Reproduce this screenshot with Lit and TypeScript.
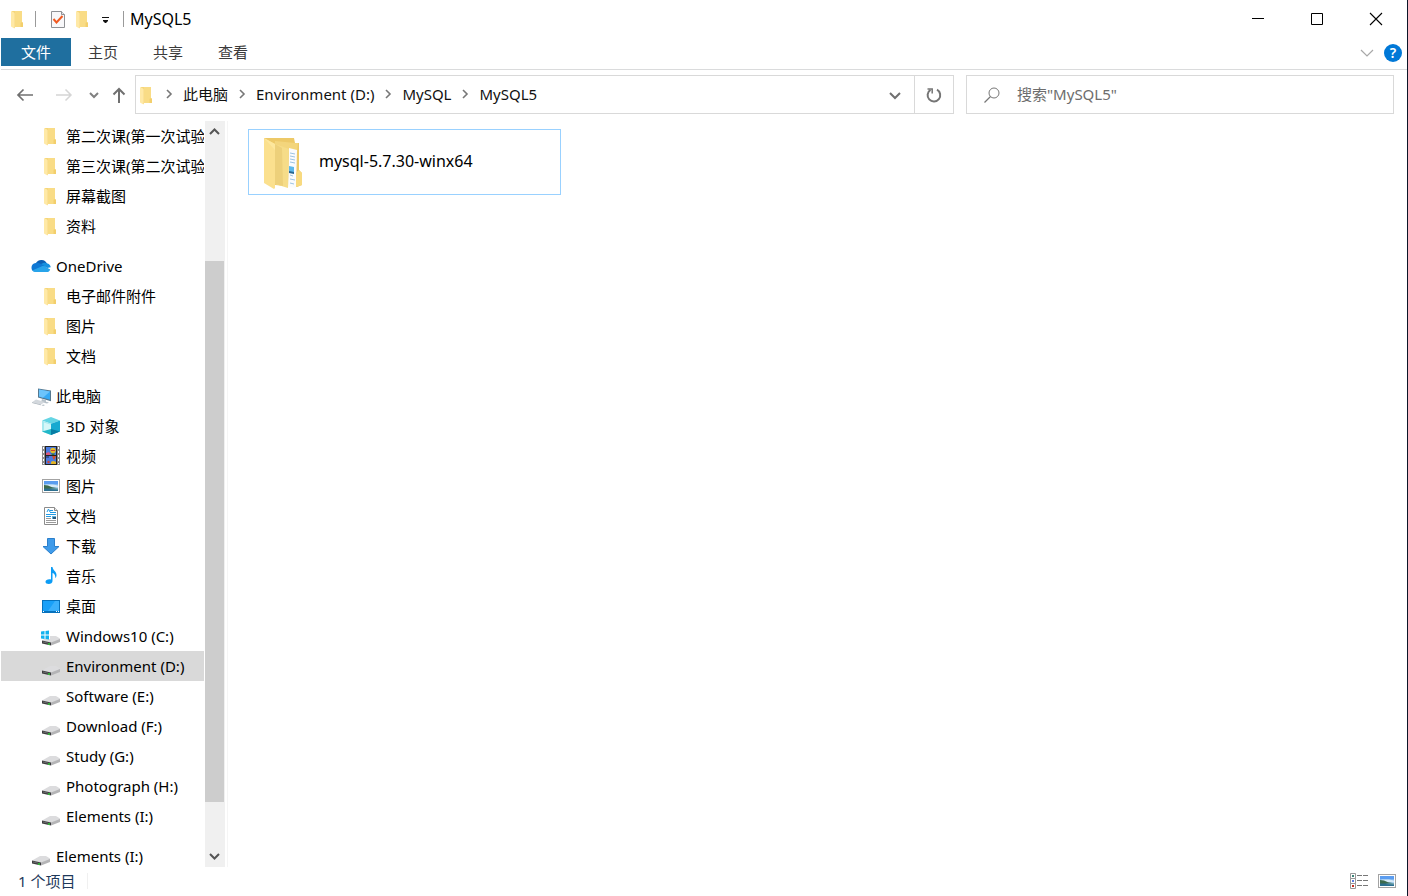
import { LitElement, html, css, svg, nothing } from "lit";
import { customElement, property } from "lit/decorators.js";

const picture = svg`
  <path d="M1 3h18v14H1z" fill="#a3a3a3"/><path d="M2 4h16v12H2z" fill="#fff"/>
  <path d="M3 5h14v10H3z" fill="#7fb7f0"/><path d="M3 5h14v3H3z" fill="#5b9df0"/>
  <path d="M5 8.500h7l5 1v2H3v-2z" fill="#d6e9f7"/>
  <path d="M3 9l4 .6 4 1.700 6 .9v.8H3z" fill="#3c6a4c"/><path d="M3 12.500h14V15H3z" fill="#2c6f8f"/>
  <path d="M8 13l9-1v1.500z" fill="#7fb0bb"/>`;

const drive = svg`
  <path d="M1 14.500L9 10h6l4 2.500v1.500l-9 3z" fill="#dcdcde"/>
  <path d="M10 16.500l9-3.500v3l-9 3.500z" fill="#b4b4b6"/>
  <path d="M1 14.500l9 2v3l-9-2z" fill="#3d3d3f"/>
  <path d="M2 15.600l5 1.200v.8l-5-1.100z" fill="#707072"/>
  <circle cx="8" cy="17.900" r="1" fill="#2fd23a"/>`;

const art = {
  folder: svg`
    <path d="M4 2h10v11l1 1v4H5z" fill="#f6d67a"/>
    <path d="M7 2h7v11l-2 1v4H7z" fill="#f9dc86"/>
    <path d="M13 14l1-1 1 1v4h-2z" fill="#f3cf6c"/>
    <path d="M3 2l3 1.500 1 2V19l-1 .3L3 17.500z" fill="#ffe9a6"/>
    <path d="M6 3.500l1 2V19l-1 .3z" fill="#fbe196"/>`,
  cloud: svg`
    <path d="M5 7a6.200 6.200 0 0 1 11 .8L10 12z" fill="#0b5fb4"/>
    <path d="M4.800 7C7 6.400 8.500 7.200 10 8l5 3-11 4.800C-1 15 -.6 7.500 4.800 7z" fill="#0f78d4"/>
    <path d="M10 8c3-1.600 5-1.600 6.500-.5 2 .6 3 2 3.200 3.700L16 12z" fill="#1590df"/>
    <path d="M1.200 14.600L11 10.200c1.500-.6 2.500 0 3.500.6l4.700 2.600c-.4 1.500-1.500 2.600-3.200 2.600H4.500c-1.500 0-2.500-.5-3.300-1.400z" fill="#28a4ea"/>`,
  pc: svg`
    <path d="M7 2.500l13 2v10.700L7 11.500z" fill="#56788f"/>
    <path d="M8 3.600l11 1.800v8.400L8 10.600z" fill="#36a9f4"/>
    <path d="M8 3.600l11 1.800-7 6.400-4-1.200z" fill="#6cc4fb"/>
    <path d="M11 13l4 1.200v1.600l3 .8-2 .9-6-1.500z" fill="#b6c0c8"/>
    <path d="M5 13.500l9 2.500-4 2.500-9-2.300z" fill="#d3d8dd"/>
    <path d="M1 16.200l9 2.300v.8l-9-2.200z" fill="#a8b1b9"/>
    <path d="M12 18.500l2 .5-1.500 1-2-.5z" fill="#bac3ca"/>`,
  cube: svg`
    <path d="M10 1l9 3.500-9 3.300L1 4.500z" fill="#65d5e4"/>
    <path d="M1 4.500l9 3.300V19l-9-3.500z" fill="#a6e9ef"/>
    <path d="M19 4.500l-9 3.300V19l9-3.500z" fill="#16a9d0"/>
    <path d="M3 6.500l7 2.300v5.700l-7 2.300z" fill="#d6f7f8"/>
    <path d="M1 15.500l9-2.500v6z" fill="#22b7c8"/>
    <path d="M10 13v6l9-3.500z" fill="#087da4"/>`,
  video: svg`
    <path d="M1 0h18v19H1z" fill="#8d8d8d"/><path d="M4 0h12v19H4z" fill="#222"/>
    <path d="M2 1h1v2H2zm0 4h1v2H2zm0 4h1v2H2zm0 4h1v2H2zm0 4h1v1H2zM17 1h1v2h-1zm0 4h1v2h-1zm0 4h1v2h-1zm0 4h1v2h-1zm0 4h1v1h-1z" fill="#fff"/>
    <path d="M5 1h10v8H5zm0 9h10v8H5z" fill="#4a7be0"/>
    <circle cx="12" cy="4.500" r="2.700" fill="#e5bb25"/><path d="M10 4h4v1h-4z" fill="#cc3f2f"/>
    <path d="M5 7l3-1 2 3H5z" fill="#dc587d"/><path d="M10 7.500h4l-1 1.500h-2z" fill="#3b7638"/>
    <path d="M11 10h4l-1.500 3.500h-1z" fill="#d64b27"/><circle cx="7.500" cy="16" r="1.200" fill="#d34434"/>
    <path d="M10 16q2-2 5 0v2h-5z" fill="#e0b325"/><path d="M5 10h3v2H5z" fill="#345099"/>`,
  picture,
  document: svg`
    <path d="M3.500 1.500h10l3 3v14h-13z" fill="#fff" stroke="#8b8b8b"/>
    <path d="M13.500 1.500v3h3" fill="#e9e9e9" stroke="#8b8b8b"/>
    <path d="M6 6l1.500-3L9 6M9 4.500h3M9 6.500h6M5 8.500h10M5 10.500h5" fill="none" stroke="#219ae4"/>
    <path d="M11 10h4v3h-4z" fill="#5fb1dc"/><path d="M12 11h3v2h-3z" fill="#28577c"/>
    <path d="M5 12.500h5M5 14.500h10M5 16.500h10" stroke="#9a9a9a"/>`,
  download: svg`<path d="M6.500 2.500h7v8h4.500L10 18l-8-7.500h4.500z" fill="#3f9bea" stroke="#2b7fcb"/>`,
  music: svg`
    <path d="M10 1h1.500c.5 3.500 4 4.500 4 8 0 1.500-.5 2.500-1.200 3.200.2-3-.8-4.700-2.800-5.200v8c0 2-1.800 3-3.700 3-2 0-3.300-1-3.300-2.300C4.500 14 7 13 10 13.500z" fill="#0c9cf5"/>`,
  desktop: svg`
    <path d="M1 4h18v13H1z" fill="#0672bd"/><path d="M2 5h16v10H2z" fill="#19a0f8"/>
    <path d="M14 5h4v10H7z" fill="#3bb0fb"/><path d="M2 15h1v1H2zm13 0h1v1h-1zm2 0h1v1h-1z" fill="#fff"/>`,
  drive,
  system: svg`
    ${drive}
    <path d="M0 4h9v9H0z" fill="#fff"/>
    <path d="M0 5.500l3.500-.5v3.500H0zM4.500 5L8 4.500v4H4.500zM0 9.500h3.500V13L0 12.500zM4.500 9.500H8v4l-3.500-.5z" fill="#12b2ef"/>`,
  check: svg`
    <path d="M3.500 2.500h10l3 3v13h-13z" fill="#f8f8fa" stroke="#8f9195"/>
    <path d="M13.500 2.500v3h3" fill="#e3e4e8" stroke="#8f9195"/>
    <path d="M5.500 10l3 3.500 6-6.500" fill="none" stroke="#f05a22" stroke-width="2"/>`,
  customize: svg`<path d="M4 8h7v1H4zM5 11h5v1L8 14H7l-2-2z" fill="#111"/>`,
  back: svg`<path d="M18 10H3M8.500 4.500L3 10l5.500 5.500" fill="none" stroke="#707070" stroke-width="1.700"/>`,
  forward: svg`<path d="M2 10h15M11.500 4.500L17 10l-5.500 5.500" fill="none" stroke="#d5d5d5" stroke-width="1.500"/>`,
  recent: svg`<path d="M6 8l4 4 4-4" fill="none" stroke="#808080" stroke-width="2"/>`,
  up: svg`<path d="M10 18V4M4.500 9.500L10 4l5.500 5.500" fill="none" stroke="#707070" stroke-width="2"/>`,
  down: svg`<path d="M5 8l5 5 5-5" fill="none" stroke="#707070" stroke-width="2"/>`,
  expand: svg`<path d="M4 7l6 6 6-6" fill="none" stroke="#a8a8a8" stroke-width="1.200"/>`,
  refresh: svg`
    <path d="M13 4.700a6.300 6.300 0 1 1-6.500 .2" fill="none" stroke="#757575" stroke-width="2"/>
    <path d="M3.500 4h4.700v4.500" fill="none" stroke="#757575" stroke-width="1.500"/>`,
  search: svg`<circle cx="12" cy="8" r="5" fill="none" stroke="#777"/><path d="M8.500 11.500L2.500 17.500" stroke="#777" stroke-width="1.200"/>`,
  crumb: svg`<path d="M8 5l4 4-4 4" fill="none" stroke="#777" stroke-width="1.600"/>`,
  minimize: svg`<path d="M4 9h12v1H4z" fill="#000"/>`,
  maximize: svg`<path d="M4.500 4.500h11v11h-11z" fill="none" stroke="#000"/>`,
  close: svg`<path d="M4 4l12 12M16 4L4 16" stroke="#000" stroke-width="1.100"/>`,
  scrollUp: svg`<path d="M5 13l4.500-4.500L14 13" fill="none" stroke="#555" stroke-width="2"/>`,
  scrollDown: svg`<path d="M5 7l4.500 4.500L14 7" fill="none" stroke="#555" stroke-width="2"/>`,
  details: svg`
    <path d="M1.500 2.500h5v5h-5zM1.500 7.500h5v5h-5zM1.500 12.500h5v5h-5z" fill="#fff" stroke="#999"/>
    <path d="M3 4h2v2H3z" fill="#3b8276"/><path d="M3 9h2v2H3z" fill="#5d7de0"/><path d="M3 14h2v2H3z" fill="#c42d20"/>
    <path d="M8 4.500h5M14 4.500h5M8 9.500h5M14 9.500h5M8 14.500h5M14 14.500h5" stroke="#777"/>`,
};

type IconName = keyof typeof art;
const icon = (name: IconName) =>
  html`<svg class="icon" viewBox="0 0 20 20" aria-hidden="true">${art[name]}</svg>`;

const iconStyles = css`
  .icon {
    display: block;
    flex: none;
    width: 20px;
    height: 20px;
  }
  button {
    display: flex;
    align-items: center;
    justify-content: center;
    margin: 0;
    padding: 0;
    border: 0;
    background: none;
    font: inherit;
    color: inherit;
  }
`;

interface TreeItem {
  label: string;
  icon: IconName;
  root?: boolean;
  selected?: boolean;
}

const groups: TreeItem[][] = [
  [
    { label: "第二次课(第一次试验", icon: "folder" },
    { label: "第三次课(第二次试验", icon: "folder" },
    { label: "屏幕截图", icon: "folder" },
    { label: "资料", icon: "folder" },
  ],
  [
    { label: "OneDrive", icon: "cloud", root: true },
    { label: "电子邮件附件", icon: "folder" },
    { label: "图片", icon: "folder" },
    { label: "文档", icon: "folder" },
  ],
  [
    { label: "此电脑", icon: "pc", root: true },
    { label: "3D 对象", icon: "cube" },
    { label: "视频", icon: "video" },
    { label: "图片", icon: "picture" },
    { label: "文档", icon: "document" },
    { label: "下载", icon: "download" },
    { label: "音乐", icon: "music" },
    { label: "桌面", icon: "desktop" },
    { label: "Windows10 (C:)", icon: "system" },
    { label: "Environment (D:)", icon: "drive", selected: true },
    { label: "Software (E:)", icon: "drive" },
    { label: "Download (F:)", icon: "drive" },
    { label: "Study (G:)", icon: "drive" },
    { label: "Photograph (H:)", icon: "drive" },
    { label: "Elements (I:)", icon: "drive" },
  ],
  [{ label: "Elements (I:)", icon: "drive", root: true }],
];

@customElement("folder-tree")
class FolderTree extends LitElement {
  @property({ attribute: false }) groups: TreeItem[][] = [];

  static styles = [
    iconStyles,
    css`
      :host {
        display: grid;
        grid-template-columns: minmax(0, 1fr) 20px;
        gap: 1px;
        min-height: 0;
        overflow: hidden;
      }
      .tree {
        display: flex;
        flex-direction: column;
        gap: 10px;
        min-height: 0;
        overflow: hidden;
      }
      .group {
        flex: none;
        margin: 0;
        padding: 0;
        list-style: none;
      }
      .row {
        display: flex;
        align-items: center;
        gap: 5px;
        height: 30px;
        padding-left: 40px;
        color: #000;
        text-decoration: none;
        white-space: nowrap;
      }
      .root {
        padding-left: 30px;
      }
      .selected {
        background: #d9d9d9;
      }
      .scroll {
        display: grid;
        grid-template-rows: 20px minmax(0, 1fr) 20px;
        background: #f0f0f0;
      }
      .track {
        display: grid;
        grid-template-rows: 120fr 541fr 45fr;
      }
      .thumb {
        grid-row: 2;
        margin-right: 1px;
        background: #cdcdcd;
      }
    `,
  ];

  render() {
    return html`
      <nav class="tree" aria-label="导航窗格">
        ${this.groups.map(
          (group) => html`<ul class="group">
            ${group.map(
              (item) => html`<li>
                <a
                  class="row ${item.root ? "root" : ""} ${item.selected ? "selected" : ""}"
                  href="#"
                  aria-current=${item.selected ? "true" : nothing}
                  >${icon(item.icon)}<span>${item.label}</span></a
                >
              </li>`,
            )}
          </ul>`,
        )}
      </nav>
      <div class="scroll">
        <button aria-label="向上滚动">${icon("scrollUp")}</button>
        <div class="track"><div class="thumb"></div></div>
        <button aria-label="向下滚动">${icon("scrollDown")}</button>
      </div>
    `;
  }
}

@customElement("app-root")
class AppRoot extends LitElement {
  static styles = [
    iconStyles,
    css`
      :host {
        display: grid;
        grid-template-rows: 38px 32px 51px minmax(0, 1fr) 29px;
        box-sizing: border-box;
        height: 100vh;
        border-left: 1px solid #fff;
        border-right: 1px solid #0b1528;
        background: #fff;
        color: #111;
        font: 15px/20px "Noto Sans", "Noto Sans CJK SC", sans-serif;
      }
      .titlebar {
        display: flex;
        align-items: center;
        padding: 0 2px 0 7px;
      }
      .quick {
        display: flex;
        align-items: center;
        gap: 5px;
      }
      .rule {
        width: 1px;
        height: 16px;
        background: #9a9a9a;
      }
      .quick .rule {
        margin: 0 7px 0 2px;
      }
      .quick .rule:last-child {
        margin: 0;
      }
      .title {
        margin: 0;
        padding-left: 6px;
        font: inherit;
        font-size: 16px;
        color: #000;
      }
      .window {
        display: flex;
        height: 38px;
        margin-left: auto;
      }
      .window button {
        width: 59px;
      }
      .ribbon {
        display: flex;
        align-items: flex-start;
        border-bottom: 1px solid #dadbdc;
      }
      .tab {
        height: 28px;
        padding: 0 18px 0 17px;
        color: #3b3b3b;
      }
      .file {
        padding: 0 20px;
        background: #1f6f9f;
        color: #fff;
      }
      .aids {
        display: flex;
        align-items: center;
        gap: 7px;
        height: 30px;
        margin-left: auto;
        padding-right: 5px;
      }
      .help {
        width: 18px;
        height: 18px;
        border-radius: 9px;
        background: #0078d7;
        color: #fff;
        font-size: 14px;
        font-weight: 600;
      }
      .location {
        display: flex;
        align-items: flex-start;
        padding: 5px 13px 0 14px;
      }
      .history {
        display: flex;
        align-items: center;
        gap: 10px;
        height: 39px;
        padding-right: 6px;
      }
      .history button:first-child {
        margin-right: 9px;
      }
      .history button:last-child {
        margin-left: -5px;
      }
      .address,
      .search {
        display: flex;
        align-items: center;
        box-sizing: border-box;
        height: 39px;
        min-width: 0;
        border: 1px solid #d9d9d9;
      }
      .address {
        flex: 816 1 0;
        margin-right: 12px;
        padding-left: 1px;
      }
      .crumbs {
        display: flex;
        align-items: center;
        min-width: 0;
        margin: 0 auto 0 0;
        padding: 0 0 0 2px;
        list-style: none;
        overflow: hidden;
      }
      .crumbs li {
        display: flex;
        align-items: center;
        white-space: nowrap;
      }
      .crumbs a {
        padding: 0 4px 2px;
        color: #111;
        text-decoration: none;
      }
      .address button {
        flex: none;
        width: 38px;
        height: 37px;
      }
      .address .refresh {
        border-left: 1px solid #d9d9d9;
        width: 39px;
      }
      .search {
        flex: 411 1 0;
        gap: 15px;
        padding-left: 15px;
      }
      .search input {
        flex: 1;
        min-width: 0;
        padding: 0 0 2px;
        border: 0;
        outline: 0;
        background: none;
        font: inherit;
      }
      .search input::placeholder {
        color: #6d6d6d;
        opacity: 1;
      }
      .body {
        display: grid;
        grid-template-columns: 224px minmax(0, 1fr);
        gap: 2px;
        min-height: 0;
      }
      .files {
        display: grid;
        grid-template-columns: repeat(auto-fill, 313px);
        align-content: start;
        padding: 8px 20px;
        border-left: 1px solid #f5f5f5;
      }
      .tile {
        display: flex;
        align-items: center;
        gap: 14px;
        box-sizing: border-box;
        height: 66px;
        padding-left: 8px;
        border: 1px solid #99d1ff;
        color: #000;
        font-size: 16px;
        text-decoration: none;
      }
      .tile span {
        padding-bottom: 2px;
      }
      .cover {
        width: 48px;
        height: 60px;
      }
      .status {
        display: flex;
        align-items: center;
        padding: 0 10px 2px 17px;
        color: #1e395b;
      }
      .status .count {
        padding-right: 12px;
        border-right: 1px solid #f0f0f0;
        line-height: 16px;
      }
      .views {
        display: flex;
        gap: 8px;
        margin-left: auto;
      }
    `,
  ];

  private crumbs = ["此电脑", "Environment (D:)", "MySQL", "MySQL5"];

  render() {
    return html`
      <header class="titlebar">
        <div class="quick">
          ${icon("folder")}
          <span class="rule"></span>
          <button aria-label="属性">${icon("check")}</button>
          <button aria-label="新建文件夹">${icon("folder")}</button>
          <button aria-label="自定义快速访问工具栏">${icon("customize")}</button>
          <span class="rule"></span>
        </div>
        <h1 class="title">MySQL5</h1>
        <div class="window">
          <button aria-label="最小化">${icon("minimize")}</button>
          <button aria-label="最大化">${icon("maximize")}</button>
          <button aria-label="关闭">${icon("close")}</button>
        </div>
      </header>
      <div class="ribbon">
        <button class="tab file">文件</button>
        <button class="tab">主页</button>
        <button class="tab">共享</button>
        <button class="tab">查看</button>
        <div class="aids">
          <button aria-label="展开功能区">${icon("expand")}</button>
          <button class="help" aria-label="帮助">?</button>
        </div>
      </div>
      <div class="location">
        <div class="history">
          <button aria-label="后退">${icon("back")}</button>
          <button aria-label="前进" disabled>${icon("forward")}</button>
          <button aria-label="最近浏览的位置">${icon("recent")}</button>
          <button aria-label="上移">${icon("up")}</button>
        </div>
        <div class="address">
          ${icon("folder")}
          <ol class="crumbs">
            ${this.crumbs.map((name) => html`<li>${icon("crumb")}<a href="#">${name}</a></li>`)}
          </ol>
          <button aria-label="以前的位置">${icon("down")}</button>
          <button class="refresh" aria-label="刷新">${icon("refresh")}</button>
        </div>
        <label class="search">
          ${icon("search")}
          <input type="text" aria-label="搜索" placeholder='搜索"MySQL5"' />
        </label>
      </div>
      <div class="body">
        <folder-tree .groups=${groups}></folder-tree>
        <main class="files">
          <a class="tile" href="#">
            <svg class="cover" viewBox="0 0 48 60" aria-hidden="true">
              <path d="M7 6h30l1 5h4v27l3 3v12l-5 2-22-2z" fill="#edc968" />
              <path d="M18 9l20 2h3l-1 10-22-5z" fill="#f3d57c" />
              <path d="M32 16l8 2-1 38-8-1z" fill="#fafbfd" />
              <path d="M33 21l5 1M33 24l5 1M33 27l5 1M33 30l5 1M33 43l3 1M33 47l5 1M33 51l4 1" stroke="#9dc3e2" />
              <path d="M32 34l5 1v6l-5-1z" fill="#5db8ea" />
              <path d="M32 39l5 1v2l-5-1z" fill="#276590" />
              <path d="M39 41l3-3 3 3v12l-6 2z" fill="#f8da80" />
              <path d="M18 12l14 5-1 39-13-4z" fill="#f6dc88" />
              <path d="M18 12l7 4 1 38-8-2z" fill="#edd07a" />
              <path d="M7 6l11 6v44l-1 1-10-6z" fill="#fbe08e" />
              <path d="M7 6l11 6v6z" fill="#fde79d" />
            </svg>
            <span>mysql-5.7.30-winx64</span>
          </a>
        </main>
      </div>
      <footer class="status">
        <span class="count">1 个项目</span>
        <div class="views">
          <button aria-label="详细信息">${icon("details")}</button>
          <button aria-label="大缩略图">${icon("picture")}</button>
        </div>
      </footer>
    `;
  }
}
